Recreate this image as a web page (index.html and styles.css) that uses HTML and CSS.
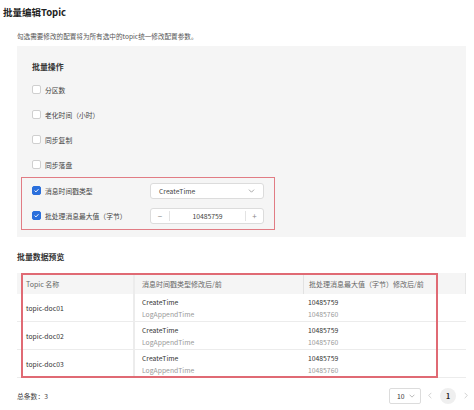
FILE: index.html
```html
<!DOCTYPE html>
<html lang="zh">
<head>
<meta charset="utf-8">
<link rel="stylesheet" href="styles.css">
</head>
<body>
<h1 class="title">批量编辑Topic</h1>
<div class="content">
  <p class="hint">勾选需要修改的配置将为所有选中的topic统一修改配置参数。</p>
  <section class="panel">
    <h2 class="sub">批量操作</h2>
    <div class="op-row"><span class="cb"></span><span class="lbl">分区数</span></div>
    <div class="op-row"><span class="cb"></span><span class="lbl">老化时间（小时）</span></div>
    <div class="op-row"><span class="cb"></span><span class="lbl">同步复制</span></div>
    <div class="op-row"><span class="cb"></span><span class="lbl">同步落盘</span></div>
    <div class="op-group">
      <div class="op-grid">
        <div class="op-row"><span class="cb on"><svg viewBox="0 0 10 10" width="9" height="9"><polyline points="2.3,5.1 4.2,7 7.8,3.2" fill="none" stroke="#fff" stroke-width="1.4"/></svg></span><span class="lbl">消息时间戳类型</span></div>
        <div class="select"><span>CreateTime</span><svg viewBox="0 0 8 5" width="7" height="4"><polyline points="0.8,0.8 4,4 7.2,0.8" fill="none" stroke="#888" stroke-width="0.9"/></svg></div>
      </div>
      <div class="op-grid">
        <div class="op-row"><span class="cb on"><svg viewBox="0 0 10 10" width="9" height="9"><polyline points="2.3,5.1 4.2,7 7.8,3.2" fill="none" stroke="#fff" stroke-width="1.4"/></svg></span><span class="lbl">批处理消息最大值（字节）</span></div>
        <div class="number"><span class="nbtn minus">−</span><span class="nval">10485759</span><span class="nbtn plus">+</span></div>
      </div>
    </div>
  </section>

  <h2 class="sub section">批量数据预览</h2>
  <div class="tbl-wrap">
    <div class="tbl">
      <div class="th c1">Topic 名称</div>
      <div class="th c2">消息时间戳类型修改后/前</div>
      <div class="th c3">批处理消息最大值（字节）修改后/前</div>

      <div class="td c1 name">topic-doc01</div>
      <div class="td c2"><span class="new">CreateTime</span><span class="old">LogAppendTime</span></div>
      <div class="td c3"><span class="new">10485759</span><span class="old">10485760</span></div>

      <div class="td c1 name">topic-doc02</div>
      <div class="td c2"><span class="new">CreateTime</span><span class="old">LogAppendTime</span></div>
      <div class="td c3"><span class="new">10485759</span><span class="old">10485760</span></div>

      <div class="td c1 name">topic-doc03</div>
      <div class="td c2"><span class="new">CreateTime</span><span class="old">LogAppendTime</span></div>
      <div class="td c3"><span class="new">10485759</span><span class="old">10485760</span></div>
    </div>
    <div class="mark"></div>
  </div>

  <div class="footer">
    <span class="total">总条数：3</span>
    <div class="pager">
      <div class="psize"><span>10</span><svg viewBox="0 0 8 5" width="6" height="4"><polyline points="0.8,0.8 4,4 7.2,0.8" fill="none" stroke="#999" stroke-width="0.9"/></svg></div>
      <svg class="arrow" viewBox="0 0 6 10" width="4" height="7"><polyline points="5,1 1,5 5,9" fill="none" stroke="#bbb" stroke-width="1"/></svg>
      <span class="page">1</span>
      <svg class="arrow" viewBox="0 0 6 10" width="4" height="7"><polyline points="1,1 5,5 1,9" fill="none" stroke="#bbb" stroke-width="1"/></svg>
    </div>
  </div>
</div>
</body>
</html>
```

FILE: styles.css
```css
* { box-sizing: border-box; }
html, body { margin: 0; padding: 0; background: #fff; }
body {
  font-family: "Noto Sans CJK SC", "Noto Sans", sans-serif;
  color: #333;
  width: 474px;
  height: 410px;
  overflow: hidden;
}
.title {
  margin: 0;
  padding: 2px 3px 0;
  font-size: 9.5px;
  line-height: 20px;
  font-weight: 700;
  color: #222;
}
.content { padding: 0 8px 0 17px; }
.hint {
  margin: 7px 0 0;
  font-size: 6.6px;
  line-height: 14px;
  color: #555;
}
.panel {
  margin-top: 3px;
  background: #f5f5f5;
  padding: 14px 15px 7px;
}
.sub {
  margin: 0;
  font-size: 7.9px;
  line-height: 14px;
  font-weight: 700;
  color: #333;
}
.panel .sub { margin-bottom: 3px; }
.op-row {
  height: 25px;
  display: flex;
  align-items: center;
  gap: 4px;
}
.cb {
  width: 9px;
  height: 9px;
  border: 1px solid #cfcfcf;
  border-radius: 2px;
  background: #fff;
  display: flex;
  align-items: center;
  justify-content: center;
}
.cb.on {
  background: #2a6fdc;
  border-color: #2a6fdc;
}
.cb svg { display: block; }
.lbl {
  font-size: 6.8px;
  color: #444;
  white-space: nowrap;
}
.op-group {
  margin-left: -11px;
  width: 254px;
  border: 1px solid #e17c84;
  padding: 0 10px 1px;
}
.op-grid {
  display: grid;
  grid-template-columns: 118px 114px;
  align-items: center;
}
.select, .number {
  height: 16px;
  background: #fff;
  border: 1px solid #dcdcdc;
  border-radius: 3px;
  display: flex;
  align-items: center;
  font-size: 6.8px;
  color: #444;
}
.select {
  justify-content: space-between;
  padding: 0 8px 0 8px;
}
.select svg { display: block; }
.nbtn {
  width: 19px;
  height: 10px;
  display: flex;
  align-items: center;
  justify-content: center;
  color: #888;
  font-size: 8px;
}
.minus { border-right: 1px solid #e3e3e3; }
.plus { border-left: 1px solid #e3e3e3; width: 18px; }
.nval { flex: 1; text-align: center; }
.section { margin-top: 13px; }
.tbl-wrap {
  position: relative;
  margin-top: 9px;
}
.tbl {
  display: grid;
  grid-template-columns: 116px 170px 163px;
}
.th {
  height: 21px;
  background: #f5f5f5;
  font-size: 7px;
  color: #666;
  display: flex;
  align-items: center;
  padding-left: 9px;
  white-space: nowrap;
}
.td {
  height: 28px;
  border-bottom: 1px solid #ececec;
  display: flex;
  flex-direction: column;
  justify-content: center;
  padding-left: 9px;
  font-size: 6.8px;
}
.c2 { border-left: 2px solid #ececec; padding-left: 7px; }
.th.c3 { border-left: 1px solid #e2e2e2; padding-left: 5px; }
.td.c3 { padding-left: 5px; }
.th.c3 { border-right: 1px solid #e6e6e6; }
.name { color: #333; }
.new { color: #333; line-height: 12px; }
.old { color: #999; line-height: 12px; }
.mark {
  position: absolute;
  left: 4px;
  top: 0;
  width: 417px;
  height: 105px;
  border: 2px solid #e06a74;
  pointer-events: none;
}
.footer {
  margin-top: 9px;
  height: 17px;
  display: flex;
  align-items: center;
  justify-content: space-between;
  margin-right: -2px;
}
.total {
  font-size: 6.8px;
  color: #444;
}
.pager {
  display: flex;
  align-items: center;
  gap: 8px;
}
.psize {
  width: 32px;
  height: 16px;
  border: 1px solid #dcdcdc;
  border-radius: 2px;
  display: flex;
  align-items: center;
  justify-content: space-between;
  padding: 0 5px 0 7px;
  font-size: 6.8px;
  color: #333;
  margin-right: -1px;
}
.psize svg { display: block; }
.arrow { display: block; }
.page {
  width: 16px;
  height: 16px;
  border-radius: 50%;
  background: #efefef;
  display: flex;
  align-items: center;
  justify-content: center;
  font-size: 7px;
  font-weight: 700;
  color: #222;
}
```
